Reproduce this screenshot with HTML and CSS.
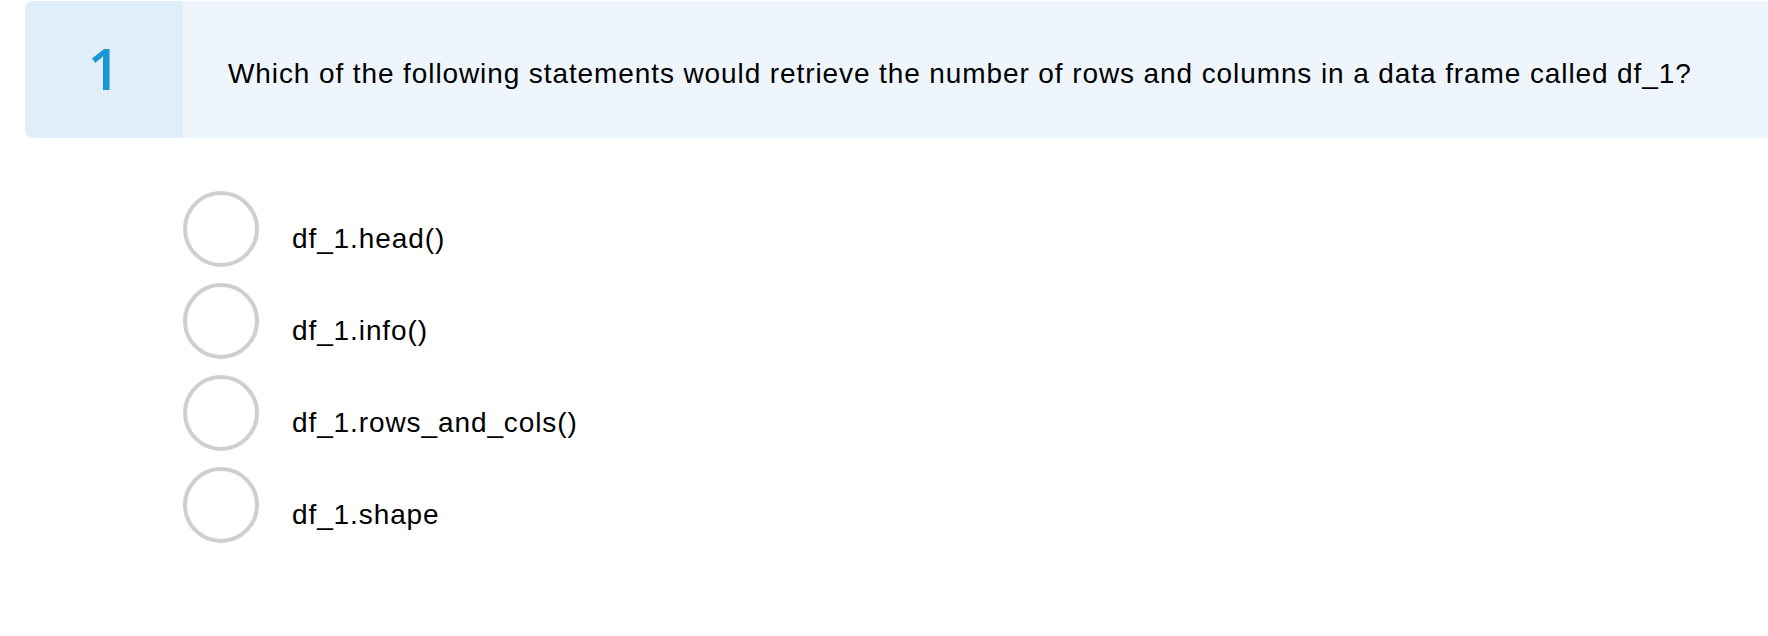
FILE: index.html
```html
<!DOCTYPE html>
<html>
<head>
<meta charset="utf-8">
<link rel="stylesheet" href="styles.css">
</head>
<body>
<div class="question">
  <div class="num">1</div>
  <div class="qtext">Which of the following statements would retrieve the number of rows and columns in a data frame called df_1?</div>
</div>
<div class="options">
  <div class="opt"><span class="radio"></span><span class="label">df_1.head()</span></div>
  <div class="opt"><span class="radio"></span><span class="label">df_1.info()</span></div>
  <div class="opt"><span class="radio"></span><span class="label">df_1.rows_and_cols()</span></div>
  <div class="opt"><span class="radio"></span><span class="label">df_1.shape</span></div>
</div>
</body>
</html>
```
FILE: styles.css
```css
html, body {
  margin: 0;
  padding: 0;
  background: #ffffff;
}
body {
  font-family: "Liberation Sans", Arial, sans-serif;
  color: #000;
}
.question {
  display: flex;
  margin: 1px 0 0 25px;
  height: 137px;
  background: #eef5fc;
  border-radius: 8px 0 0 8px;
  overflow: hidden;
}
.num {
  width: 158px;
  flex: none;
  background: #dfeef8;
  color: #1a96d4;
  font-family: "Open Sans", sans-serif;
  font-weight: 600;
  font-size: 57px;
  display: flex;
  align-items: center;
  justify-content: center;
  padding-bottom: 4px;
  box-sizing: border-box;
}
.qtext {
  display: flex;
  align-items: center;
  padding-left: 45px;
  padding-top: 8px;
  font-size: 28px;
  letter-spacing: 0.9px;
}
.options {
  display: flex;
  flex-direction: column;
  gap: 16px;
  margin: 53px 0 0 183px;
}
.opt {
  display: flex;
  align-items: center;
  gap: 33px;
}
.radio {
  width: 76px;
  height: 76px;
  box-sizing: border-box;
  border: 4px solid #cfcfcf;
  border-radius: 50%;
  flex: none;
}
.label {
  font-size: 28px;
  letter-spacing: 0.9px;
  padding-top: 20px;
}
```
